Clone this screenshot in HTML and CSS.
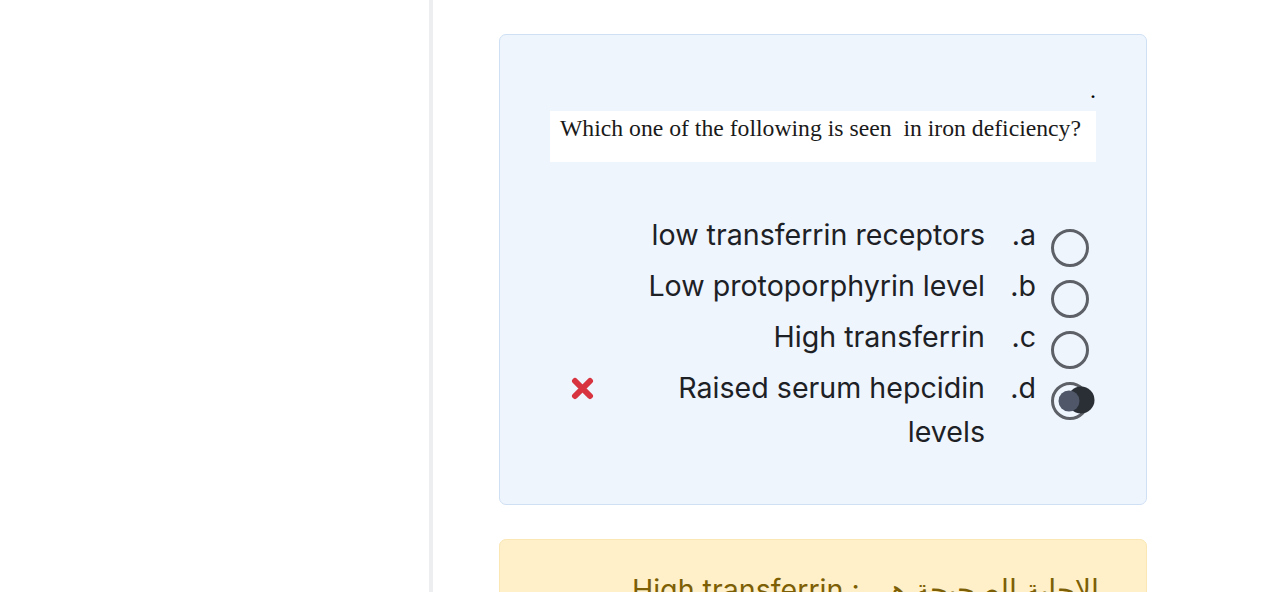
FILE: index.html
```html
<!DOCTYPE html>
<html lang="ar">
<head>
<meta charset="utf-8">
<title>Question</title>
<link rel="stylesheet" href="styles.css">
</head>
<body>
<div class="page">
  <aside class="sidebar"></aside>
  <main class="main">
    <section class="card" dir="rtl">
      <div class="qtext">
        <p class="dot">.</p>
        <div class="qbox" dir="ltr">Which one of the following is seen&nbsp; in iron deficiency?</div>
      </div>
      <div class="answers">
        <div class="opt">
          <svg class="radio" width="38" height="38" viewBox="0 0 38 38"><circle cx="19" cy="19" r="17.5" fill="none" stroke="#5d6167" stroke-width="3"/></svg>
          <span class="letter">a.</span>
          <div class="text" dir="ltr">low transferrin receptors</div>
        </div>
        <div class="opt">
          <svg class="radio" width="38" height="38" viewBox="0 0 38 38"><circle cx="19" cy="19" r="17.5" fill="none" stroke="#5d6167" stroke-width="3"/></svg>
          <span class="letter">b.</span>
          <div class="text" dir="ltr">Low protoporphyrin level</div>
        </div>
        <div class="opt">
          <svg class="radio" width="38" height="38" viewBox="0 0 38 38"><circle cx="19" cy="19" r="17.5" fill="none" stroke="#5d6167" stroke-width="3"/></svg>
          <span class="letter">c.</span>
          <div class="text" dir="ltr">High transferrin</div>
        </div>
        <div class="opt">
          <svg class="radio checked" width="38" height="38" viewBox="0 0 38 38"><circle cx="19" cy="19" r="17.5" fill="none" stroke="#5d6167" stroke-width="3"/><circle cx="30" cy="18" r="13.5" fill="#2a2e35"/><circle cx="18" cy="19" r="10.5" fill="#4f5768"/></svg>
          <span class="letter">d.</span>
          <div class="text" dir="ltr">Raised serum hepcidin levels</div>
          <svg class="wrong" width="23" height="23" viewBox="0 0 23 23"><path d="M4 4 L19 19 M19 4 L4 19" stroke="#d7343f" stroke-width="6" stroke-linecap="round" fill="none"/></svg>
        </div>
      </div>
    </section>
    <section class="feedback" dir="rtl">
      <p class="right-answer">الإجابة الصحيحة هي : High transferrin</p>
    </section>
  </main>
</div>
</body>
</html>
```

FILE: styles.css
```css
* { box-sizing: border-box; }
html, body { margin: 0; padding: 0; background: #ffffff; }
body {
  font-family: Inter, "Noto Sans", "DejaVu Sans", sans-serif;
  color: #1d2125;
  overflow: hidden;
  height: 592px;
}
.page {
  display: flex;
  height: 592px;
  overflow: hidden;
}
.sidebar {
  width: 433px;
  flex: 0 0 433px;
  border-right: 4px solid #eceef0;
}
.main {
  padding-left: 66px;
  padding-top: 34px;
}
.card {
  width: 648px;
  height: 471px;
  background: #eef5fd;
  border: 1px solid #cfe0f4;
  border-radius: 7px;
  padding: 42px 50px 50px 50px;
}
.qtext { margin: 0; }
.dot {
  margin: 0 0 8px 0;
  font-family: "Liberation Serif", "Times New Roman", serif;
  font-size: 24px;
  line-height: 26px;
  height: 26px;
  color: #000;
}
.qbox {
  background: #ffffff;
  font-family: "Liberation Serif", "Times New Roman", serif;
  font-size: 23.7px;
  line-height: 26px;
  white-space: nowrap;
  color: #1a1a1a;
  padding: 4px 10px 21px 10px;
  text-align: left;
}
.answers {
  margin-top: 51px;
  display: flex;
  flex-direction: column;
  gap: 7px;
}
.opt {
  display: flex;
  align-items: flex-start;
  font-size: 28.6px;
  line-height: 44px;
}
.radio {
  flex: 0 0 38px;
  margin-top: 16px;
  margin-bottom: -10px;
  margin-right: 7px;
  overflow: visible;
}
.letter {
  flex: 0 0 66px;
  width: 66px;
  padding-right: 15px;
  text-align: right;
}
.text {
  width: 370px;
  flex: 0 0 370px;
  text-align: right;
}
.wrong {
  flex: 0 0 23px;
  margin-top: 11px;
  margin-right: 21px;
}
.feedback {
  margin-top: 34px;
  width: 648px;
  height: 100px;
  background: #fff0c9;
  border: 1px solid #fbe7b3;
  border-radius: 7px;
  padding: 28px 47px 20px 47px;
}
.right-answer {
  margin: 0;
  font-size: 28.6px;
  line-height: 44px;
  color: #7d5f05;
  text-align: right;
}
```
